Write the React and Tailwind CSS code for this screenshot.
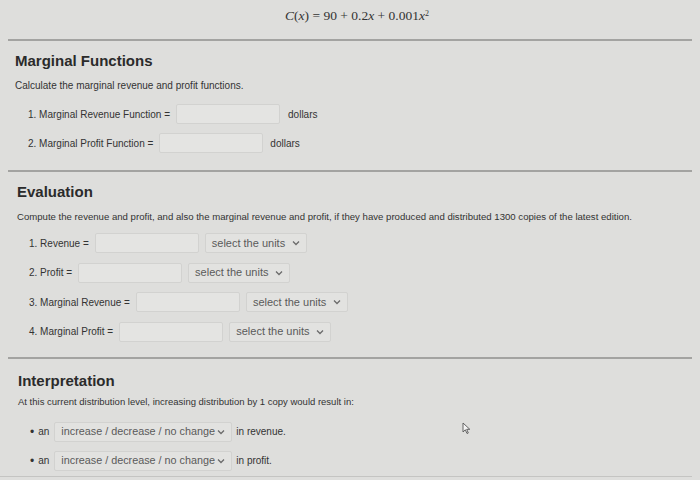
import React from "react";

function Chevron() {
  return (
    <svg width="8" height="6" viewBox="0 0 8 6" className="shrink-0">
      <path d="M1 1.5 L4 4.5 L7 1.5" fill="none" stroke="#6b6b6b" strokeWidth="1.3" />
    </svg>
  );
}

function Input({ w = "w-[104px]" }) {
  return <div className={`${w} h-[20px] border border-[#d2d2d0] bg-[#e4e4e2] rounded-[2px] shrink-0`} />;
}

function Select({ label = "select the units", w = "w-[102px]", text = "text-[11px]" }) {
  return (
    <div className={`${w} h-[20px] border border-[#d2d2d0] bg-[#e2e2e0] rounded-[2px] shrink-0 flex items-center justify-between pl-[6px] pr-[6px]`}>
      <span className={`${text} text-[#5a5a5a] leading-none whitespace-nowrap`}>{label}</span>
      <Chevron />
    </div>
  );
}

function Divider() {
  return <div className="mx-2 h-[2px] bg-[#a3a3a1]" />;
}

export default function App() {
  return (
    <div
      className="w-[700px] h-[480px] bg-[#dededc] text-[#333] overflow-hidden relative"
      style={{ fontFamily: '"Liberation Sans", Arial, sans-serif' }}
    >
      <div className="h-[39px] flex items-start justify-center pt-[6px] pl-[14px]">
        <span className="text-[13.5px] text-[#333]" style={{ fontFamily: '"Liberation Serif", "Times New Roman", serif' }}>
          <i>C</i>(<i>x</i>) = 90 + 0.2<i>x</i> + 0.001<i>x</i><sup className="text-[8px]">2</sup>
        </span>
      </div>
      <Divider />

      {/* Marginal Functions */}
      <div className="pl-[15px] pt-[11px] pb-[17px]">
        <div className="text-[15px] font-bold leading-[18px] text-[#2b2b2b]">Marginal Functions</div>
        <div className="text-[10px] leading-[14px] mt-[9px]">Calculate the marginal revenue and profit functions.</div>
        <div className="flex flex-col gap-[9px] mt-[11px] pl-[13px]">
          <div className="flex items-center gap-[6px] text-[10px]">
            <span>1. Marginal Revenue Function =</span>
            <Input />
            <span className="ml-[2px]">dollars</span>
          </div>
          <div className="flex items-center gap-[6px] text-[10px]">
            <span>2. Marginal Profit Function =</span>
            <Input />
            <span className="ml-[1px]">dollars</span>
          </div>
        </div>
      </div>
      <Divider />

      {/* Evaluation */}
      <div className="pl-[17px] pt-[11px] pb-[15px]">
        <div className="text-[15px] font-bold leading-[18px] text-[#2b2b2b]">Evaluation</div>
        <div className="text-[9.6px] leading-[14px] mt-[9px] whitespace-nowrap">
          Compute the revenue and profit, and also the marginal revenue and profit, if they have produced and distributed 1300 copies of the latest edition.
        </div>
        <div className="flex flex-col gap-[9.5px] mt-[9px] pl-[12px]">
          <div className="flex items-center gap-[6px] text-[10px]">
            <span>1. Revenue =</span>
            <Input />
            <Select />
          </div>
          <div className="flex items-center gap-[6px] text-[10px]">
            <span>2. Profit =</span>
            <Input />
            <Select />
          </div>
          <div className="flex items-center gap-[6px] text-[10px]">
            <span>3. Marginal Revenue =</span>
            <Input />
            <Select />
          </div>
          <div className="flex items-center gap-[6px] text-[10px]">
            <span>4. Marginal Profit =</span>
            <Input />
            <Select />
          </div>
        </div>
      </div>
      <Divider />

      {/* Interpretation */}
      <div className="pl-[18px] pt-[13px]">
        <div className="text-[15px] font-bold leading-[18px] text-[#2b2b2b]">Interpretation</div>
        <div className="text-[9.5px] leading-[14px] mt-[5px]">
          At this current distribution level, increasing distribution by 1 copy would result in:
        </div>
        <div className="flex flex-col gap-[9px] mt-[13px] pl-[12px]">
          <div className="flex items-center text-[10px]">
            <span className="text-[12px] leading-none mr-[4px]">•</span>
            <span className="mr-[5px]">an</span>
            <Select label="increase / decrease / no change" w="w-[178px]" text="text-[10.8px]" />
            <span className="ml-[4px]">in revenue.</span>
          </div>
          <div className="flex items-center text-[10px]">
            <span className="text-[12px] leading-none mr-[4px]">•</span>
            <span className="mr-[5px]">an</span>
            <Select label="increase / decrease / no change" w="w-[178px]" text="text-[10.8px]" />
            <span className="ml-[4px]">in profit.</span>
          </div>
        </div>
      </div>

      <div className="absolute left-0 right-[8px] top-[476px] h-[1px] bg-[#c4c4c2]" />

      <svg className="absolute left-[462px] top-[422px]" width="9" height="13" viewBox="0 0 9 13">
        <path d="M1 1 L1 10 L3.3 7.8 L5 11.5 L6.3 11 L4.7 7.3 L7.8 7.3 Z" fill="#f4f4f4" stroke="#555" strokeWidth="0.9" />
      </svg>
    </div>
  );
}
